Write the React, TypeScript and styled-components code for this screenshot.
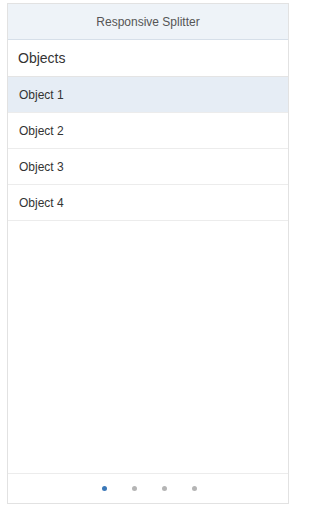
import React, { useState } from "react";
import styled, { createGlobalStyle } from "styled-components";

const Global = createGlobalStyle`
  html, body {
    margin: 0;
    padding: 0;
    background: #ffffff;
    font-family: "Liberation Sans", Arial, sans-serif;
  }
`;

const Page = styled.div`
  width: 290px;
  height: 507px;
  padding: 3px 1px 3px 7px;
  box-sizing: border-box;
`;

const Frame = styled.div`
  height: 100%;
  display: flex;
  flex-direction: column;
  border: 1px solid #e2e2e2;
  box-sizing: border-box;
  background: #ffffff;
`;

const Header = styled.div`
  height: 35px;
  flex: none;
  display: flex;
  align-items: center;
  justify-content: center;
  background: #eef3f8;
  border-bottom: 1px solid #d6dfe9;
  color: #555555;
  font-size: 12px;
`;

const ListTitle = styled.div`
  height: 36px;
  flex: none;
  display: flex;
  align-items: center;
  padding-left: 10px;
  font-size: 14px;
  color: #333333;
  border-bottom: 1px solid #e4e4e4;
`;

const Item = styled.div<{ $selected: boolean }>`
  height: 35px;
  flex: none;
  display: flex;
  align-items: center;
  padding-left: 11px;
  font-size: 12px;
  color: #333333;
  background: ${(p) => (p.$selected ? "#e6edf5" : "#ffffff")};
  border-bottom: 1px solid #ececec;
  cursor: pointer;
`;

const Spacer = styled.div`
  flex: 1;
`;

const Footer = styled.div`
  height: 29px;
  flex: none;
  display: flex;
  align-items: center;
  justify-content: center;
  gap: 25px;
  border-top: 1px solid #ececec;
  padding-left: 3px;
`;

const Dot = styled.span<{ $active: boolean }>`
  width: 5px;
  height: 5px;
  border-radius: 50%;
  background: ${(p) => (p.$active ? "#3b78b8" : "#b5b5b5")};
`;

const objects = ["Object 1", "Object 2", "Object 3", "Object 4"];

const App: React.FC = () => {
  const [selected, setSelected] = useState<number>(0);
  const [page, setPage] = useState<number>(0);
  return (
    <Page>
      <Global />
      <Frame>
        <Header>Responsive Splitter</Header>
        <ListTitle>Objects</ListTitle>
        {objects.map((name, index) => (
          <Item key={index} $selected={selected == index} onClick={() => setSelected(index)}>
            {name}
          </Item>
        ))}
        <Spacer />
        <Footer>
          {[0, 1, 2, 3].map((i) => (
            <Dot key={i} $active={page == i} onClick={() => setPage(i)} />
          ))}
        </Footer>
      </Frame>
    </Page>
  );
};

export default App;
